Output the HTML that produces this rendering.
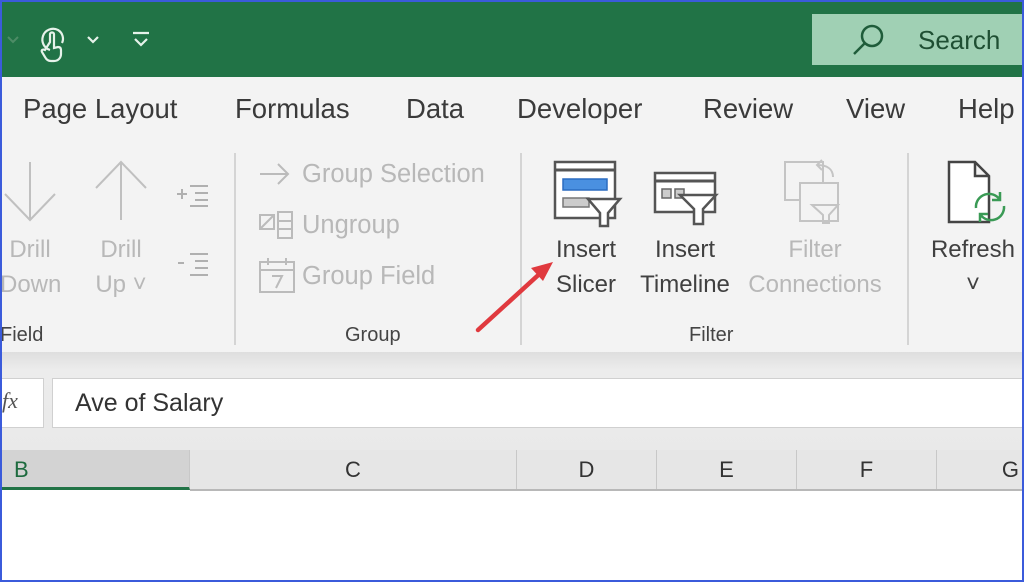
<!DOCTYPE html>
<html><head><meta charset="utf-8"><style>
*{margin:0;padding:0;box-sizing:border-box}
body{width:1024px;height:582px;overflow:hidden;position:relative;background:#fff;font-family:"Liberation Sans",sans-serif}
.a{position:absolute;white-space:nowrap}
.tab{font-size:27.5px;color:#3a3a3a;top:93px}
.g{color:#b8b8b8}
.d{color:#404040}
.lbl{font-size:24px;line-height:35px;text-align:center}
.sec{font-size:20px;color:#444;top:324px}
.vs{position:absolute;width:2px;background:#d4d4d4;top:153px;height:192px}
.col{position:absolute;top:450px;height:40px;font-size:22px;color:#333;text-align:center;line-height:40px;border-right:1px solid #c8c8c8}
</style></head><body>
<div class="a" style="left:0;top:0;width:1024px;height:77px;background:#217346"></div>
<div class="a" style="left:812px;top:14px;width:212px;height:51px;background:#a0d0b4"></div>
<svg class="a" style="left:848px;top:22px" width="40" height="36" viewBox="0 0 40 36"><circle cx="24" cy="14" r="10" fill="none" stroke="#1f5c3a" stroke-width="2.5"/><line x1="17" y1="21" x2="6" y2="32" stroke="#1f5c3a" stroke-width="2.5"/></svg>
<div class="a" style="left:918px;top:25px;font-size:26px;color:#1f4f33">Search</div>
<svg class="a" style="left:0;top:20px" width="170" height="45" viewBox="0 0 170 45"><path d="M8 17l5 5 5-5" stroke="#4d8c66" stroke-width="2" fill="none"/><path d="M50 30c-6-2-9-8-7-14 2-6 9-9 15-6 5 3 6 9 4 13M50 22v-8c0-2 4-2 4 0v14l4-1c2 0 3 1 3 3v4c0 4-3 7-7 7h-3c-3 0-5-2-6-4l-3-5c-1-2 1-3 3-2z" stroke="#e6f2ea" stroke-width="2.2" fill="none"/><path d="M88 17l5 5 5-5" stroke="#e6f2ea" stroke-width="2.2" fill="none"/><path d="M133 13h16M135 19l6 6 6-6" stroke="#e6f2ea" stroke-width="2.2" fill="none"/></svg>
<div class="a" style="left:0;top:77px;width:1024px;height:275px;background:#f3f3f3"></div>
<div class="a tab" style="left:23px">Page Layout</div>
<div class="a tab" style="left:235px">Formulas</div>
<div class="a tab" style="left:406px">Data</div>
<div class="a tab" style="left:517px">Developer</div>
<div class="a tab" style="left:703px">Review</div>
<div class="a tab" style="left:846px">View</div>
<div class="a tab" style="left:958px">Help</div>
<svg class="a" style="left:0;top:158px" width="220" height="66" viewBox="0 0 220 66"><path d="M30 4v58M5 36l25 26 25-26" stroke="#c0c0c0" stroke-width="2" fill="none"/><path d="M121 4v58M96 30l25-26 25 26" stroke="#c0c0c0" stroke-width="2" fill="none"/><path d="M177 36h10M182 31v10M190 28h18M195 35h13M195 42h13M190 48h18" stroke="#b0b0b0" stroke-width="2" fill="none"/></svg>
<svg class="a" style="left:175px;top:250px" width="40" height="30"><path d="M3 13h6M15 4h18M20 11h13M20 18h13M15 25h18" stroke="#b0b0b0" stroke-width="2"/></svg>
<div class="a g lbl" style="left:0;top:232px;width:60px">Drill<br>Down</div>
<div class="a g lbl" style="left:86px;top:232px;width:70px">Drill<br>Up ˅</div>
<div class="a sec" style="left:0">Field</div>
<div class="vs" style="left:234px"></div>
<svg class="a" style="left:258px;top:160px" width="40" height="140" viewBox="0 0 40 140"><path d="M2 14h28M20 4l10 10-10 10" stroke="#bbb" stroke-width="2" fill="none"/><rect x="2" y="55" width="14" height="14" fill="none" stroke="#bbb" stroke-width="2"/><rect x="20" y="52" width="14" height="26" fill="none" stroke="#bbb" stroke-width="2"/><path d="M20 61h14M20 69h14M3 68l12-12" stroke="#bbb" stroke-width="2"/><rect x="2" y="102" width="34" height="30" fill="none" stroke="#bbb" stroke-width="2"/><path d="M2 110h34M10 98v7M28 98v7M14 116h10l-6 12" stroke="#bbb" stroke-width="2" fill="none"/></svg>
<div class="a g" style="left:302px;top:160px;font-size:25.5px">Group Selection</div>
<div class="a g" style="left:302px;top:211px;font-size:25.5px">Ungroup</div>
<div class="a g" style="left:302px;top:262px;font-size:25.5px">Group Field</div>
<div class="a sec" style="left:345px">Group</div>
<div class="vs" style="left:520px"></div>
<svg class="a" style="left:552px;top:158px" width="170" height="72" viewBox="0 0 170 72"><rect x="3" y="4" width="60" height="56" fill="#fff" stroke="#555" stroke-width="2.5"/><path d="M3 12h60" stroke="#555" stroke-width="3"/><rect x="11" y="21" width="44" height="11" fill="#4a90e0" stroke="#2b6cc0" stroke-width="1.5"/><rect x="11" y="40" width="26" height="9" fill="#ccc" stroke="#777" stroke-width="1.5"/><path d="M36 41h32l-12 14v13h-8v-13z" fill="#fff" stroke="#555" stroke-width="2.5"/><rect x="103" y="15" width="60" height="39" fill="#fff" stroke="#555" stroke-width="2.5"/><path d="M103 23h60" stroke="#555" stroke-width="3"/><rect x="110" y="31" width="9" height="9" fill="#ccc" stroke="#666" stroke-width="1.5"/><rect x="123" y="31" width="9" height="9" fill="#ccc" stroke="#666" stroke-width="1.5"/><path d="M128 37h36l-13 14v15h-9v-15z" fill="#fff" stroke="#555" stroke-width="2.5"/></svg>
<svg class="a" style="left:782px;top:155px" width="60" height="72" viewBox="0 0 60 72"><rect x="3" y="7" width="38" height="38" fill="none" stroke="#c4c4c4" stroke-width="2"/><rect x="18" y="28" width="38" height="38" fill="#f3f3f3" stroke="#c4c4c4" stroke-width="2"/><path d="M40 5l-5 5 5 5M35 10c10 0 16 4 16 12M30 50h26l-9 10v8h-6v-8z" stroke="#c4c4c4" stroke-width="2" fill="none"/></svg>
<div class="a d lbl" style="left:546px;top:232px;width:80px">Insert<br>Slicer</div>
<div class="a d lbl" style="left:630px;top:232px;width:110px">Insert<br>Timeline</div>
<div class="a g lbl" style="left:740px;top:232px;width:150px">Filter<br>Connections</div>
<div class="a sec" style="left:689px">Filter</div>
<div class="vs" style="left:907px"></div>
<svg class="a" style="left:940px;top:158px" width="84" height="70" viewBox="0 0 84 70"><path d="M9 4h26l14 14v46H9z M35 4v14h14" fill="#fff" stroke="#444" stroke-width="2.5"/><path d="M36 50a13 13 0 0 1 24-8M64 48a13 13 0 0 1-24 8M60 34v8h-8M40 64v-8h8" stroke="#3a9a55" stroke-width="2.5" fill="none"/></svg>
<div class="a d lbl" style="left:928px;top:232px;width:90px">Refresh<br>˅</div>
<svg class="a" style="left:470px;top:258px" width="90" height="80"><path d="M8 72l68-62" stroke="#e0393e" stroke-width="4.5" stroke-linecap="round"/><path d="M83 4l-22 6 12 13z" fill="#e0393e"/></svg>
<div class="a" style="left:0;top:352px;width:1024px;height:98px;background:linear-gradient(#dedede,#ececec 18px,#e9e9e9)"></div>
<div class="a" style="left:0;top:378px;width:44px;height:50px;background:#fff;border:1px solid #d0d0d0"></div>
<div class="a" style="left:2px;top:388px;font-size:22px;font-style:italic;font-family:'Liberation Serif',serif;color:#555">fx</div>
<div class="a" style="left:52px;top:378px;width:972px;height:50px;background:#fff;border:1px solid #d0d0d0"></div>
<div class="a" style="left:75px;top:389px;font-size:25px;color:#333">Ave of Salary</div>
<div class="col" style="left:0;width:190px;background:#d3d3d3;color:#1e6b3f;text-align:left;padding-left:14px;border-bottom:3px solid #217346">B</div>
<div class="col" style="left:190px;width:327px;background:#e6e6e6">C</div>
<div class="col" style="left:517px;width:140px;background:#e6e6e6">D</div>
<div class="col" style="left:657px;width:140px;background:#e6e6e6">E</div>
<div class="col" style="left:797px;width:140px;background:#e6e6e6">F</div>
<div class="col" style="left:937px;width:87px;background:#e6e6e6;text-align:right;padding-right:4px">G</div>
<div class="a" style="left:190px;top:489px;width:834px;height:2px;background:#b8b8b8"></div>
<div class="a" style="left:0;top:0;width:1024px;height:582px;border:2px solid #3b5bdb"></div>
</body></html>
